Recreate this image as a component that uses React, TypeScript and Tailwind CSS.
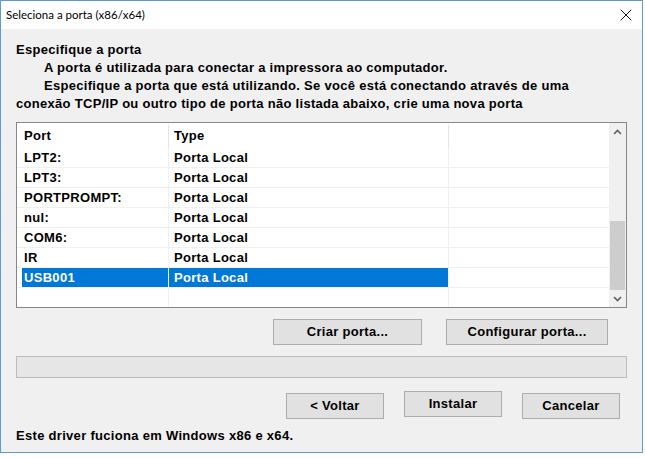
import { X } from "lucide-react";

type PortRow = {
    port: string;
    type: string;
    selected?: boolean;
};

const rows: PortRow[] = [
    { port: "LPT2:", type: "Porta Local" },
    { port: "LPT3:", type: "Porta Local" },
    { port: "PORTPROMPT:", type: "Porta Local" },
    { port: "nul:", type: "Porta Local" },
    { port: "COM6:", type: "Porta Local" },
    { port: "IR", type: "Porta Local" },
    { port: "USB001", type: "Porta Local", selected: true },
];

const sans = "font-['Liberation_Sans',Arial,sans-serif]";

function Chevron({ down }: { down?: boolean }) {
    return (
        <svg width="9" height="6" viewBox="0 0 9 6" className={down ? "rotate-180" : ""}>
            <path d="M1 5 L4.5 1.5 L8 5" fill="none" stroke="#606060" strokeWidth="1.6" />
        </svg>
    );
}

function WinButton({ label, className = "" }: { label: string; className?: string }) {
    return (
        <button
            className={`h-[26px] border border-[#adadad] bg-[#e1e1e1] text-[13px] font-bold tracking-[0.3px] text-black ${className}`}
        >
            {label}
        </button>
    );
}

function PortList() {
    return (
        <div className="mt-[9px] flex h-[186px] border border-[#828790] bg-white">
            <div className="flex flex-1 flex-col">
                {/* header */}
                <div className="flex h-[25px] items-center">
                    <div className="flex h-full w-[151px] items-center pl-[7px]">Port</div>
                    <div className="h-[23px] w-px self-end bg-[#e5e5e5]" />
                    <div className="flex h-full w-[279px] items-center pl-[5px]">Type</div>
                    <div className="h-[23px] w-px self-end bg-[#e5e5e5]" />
                </div>
                {rows.map((r) => (
                    <div key={r.port} className="flex h-[20px] border-b border-[#f0f0f0]">
                        <div className="w-[5px]" />
                        <div
                            className={`flex w-[146px] items-center pl-[2px] ${
                                r.selected ? "bg-[#0078d7] text-white" : ""
                            }`}
                        >
                            {r.port}
                        </div>
                        <div className="w-px bg-[#f0f0f0]" />
                        <div
                            className={`flex w-[279px] items-center pl-[5px] ${
                                r.selected ? "bg-[#0078d7] text-white" : ""
                            }`}
                        >
                            {r.type}
                        </div>
                        <div className="w-px bg-[#f0f0f0]" />
                    </div>
                ))}
                <div className="flex flex-1">
                    <div className="w-[151px]" />
                    <div className="w-px bg-[#f0f0f0]" />
                    <div className="w-[279px]" />
                    <div className="w-px bg-[#f0f0f0]" />
                </div>
            </div>
            {/* scrollbar */}
            <div className="flex w-[17px] flex-col bg-[#f0f0f0]">
                <div className="flex h-[17px] items-center justify-center">
                    <Chevron />
                </div>
                <div className="flex flex-1 flex-col justify-end px-px">
                    <div className="h-[69px] bg-[#cdcdcd]" />
                </div>
                <div className="flex h-[17px] items-center justify-center">
                    <Chevron down />
                </div>
            </div>
        </div>
    );
}

export default function App() {
    return (
        <div className="h-[459px] w-[645px] bg-white">
            <div className="flex h-[453px] w-[643px] flex-col border border-[#5b9bd5]">
                <div className="flex h-[28px] items-center justify-between bg-white pl-[5px] pr-[6px]">
                    <span className="font-['Lato',sans-serif] text-[11.5px] text-black">
                        Seleciona a porta (x86/x64)
                    </span>
                    <X className="h-[20px] w-[20px] text-black" strokeWidth={1.1} />
                </div>
                <div
                    className={`flex flex-1 flex-col bg-[#f0f0f0] px-[15px] pt-[12px] text-[13px] font-bold leading-[18px] tracking-[0.3px] text-black ${sans}`}
                >
                    <p>Especifique a porta</p>
                    <p className="pl-[28px]">A porta é utilizada para conectar a impressora ao computador.</p>
                    <p className="whitespace-nowrap pl-[28px]">
                        Especifique a porta que está utilizando. Se você está conectando através de uma
                    </p>
                    <p className="whitespace-nowrap">
                        conexão TCP/IP ou outro tipo de porta não listada abaixo, crie uma nova porta
                    </p>

                    <PortList />

                    <div className="mt-[11px] flex justify-end gap-[24px] pr-[19px]">
                        <WinButton label="Criar porta..." className="w-[149px]" />
                        <WinButton label="Configurar porta..." className="w-[162px]" />
                    </div>

                    <div className="mt-[11px] h-[22px] border border-[#bcbcbc] bg-[#e6e6e6]" />

                    <div className="mt-[13px] flex items-start justify-end gap-[20px] pr-[7px]">
                        <WinButton label="< Voltar" className="mt-[2px] w-[98px]" />
                        <WinButton label="Instalar" className="w-[98px]" />
                        <WinButton label="Cancelar" className="mt-[2px] w-[98px]" />
                    </div>

                    <p className="mt-[8px]">Este driver fuciona em Windows x86 e x64.</p>
                </div>
            </div>
        </div>
    );
}
